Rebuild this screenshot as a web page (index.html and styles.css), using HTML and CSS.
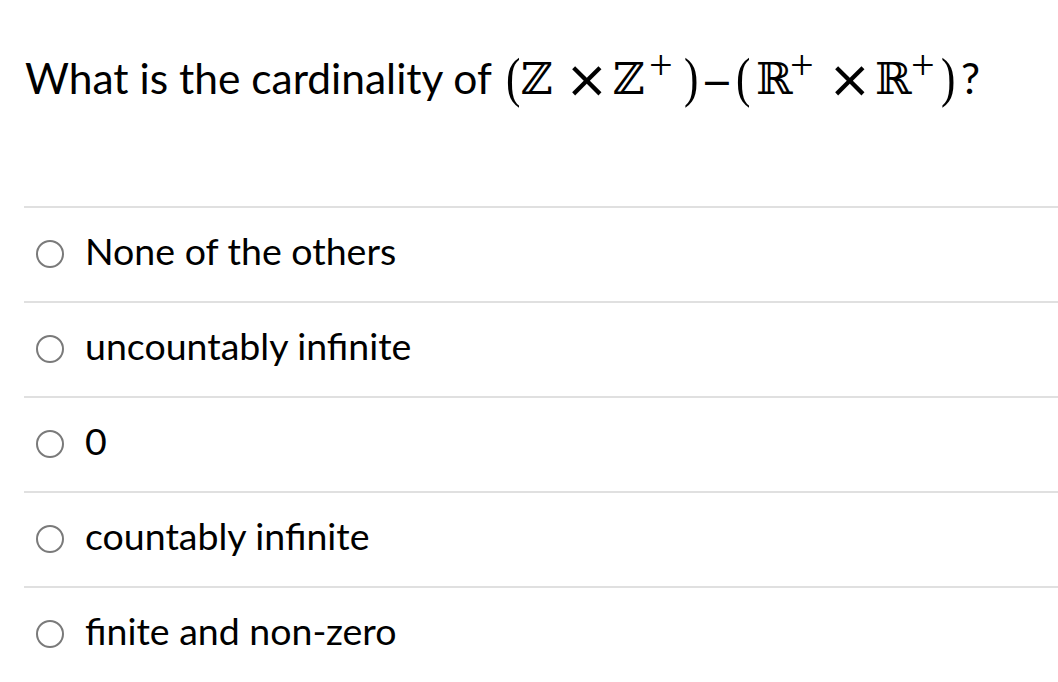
FILE: index.html
```html
<!DOCTYPE html>
<html lang="en">
<head>
<meta charset="utf-8">
<title>Quiz question</title>
<link rel="stylesheet" href="styles.css">
</head>
<body>
<div class="question">
  <h1 class="prompt">What is the cardinality of<span class="math"><span class="tk paren w15">(</span><span class="tk bb w44">ℤ</span><span class="tk op w48">×</span><span class="tk bb w36">ℤ</span><span class="tk sup w35">+</span><span class="tk paren w17">)</span><span class="tk minus w35">−</span><span class="tk paren w20">(</span><span class="tk bb w34">ℝ</span><span class="tk sup w38">+</span><span class="tk op w47">×</span><span class="tk bb w36">ℝ</span><span class="tk sup w30">+</span><span class="tk paren w20">)</span></span>?</h1>
  <ul class="answers">
    <li class="answer"><span class="radio"></span><span class="label">None of the others</span></li>
    <li class="answer"><span class="radio"></span><span class="label">uncountably infinite</span></li>
    <li class="answer"><span class="radio"></span><span class="label">0</span></li>
    <li class="answer"><span class="radio"></span><span class="label">countably infinite</span></li>
    <li class="answer"><span class="radio"></span><span class="label">finite and non-zero</span></li>
  </ul>
</div>
</body>
</html>
```
FILE: styles.css
```css
html, body {
  margin: 0;
  padding: 0;
  background: #ffffff;
}
body {
  font-family: Lato, "Noto Sans", sans-serif;
  color: #000000;
  overflow: hidden;
}
.question {
  padding: 49px 0 0 24px;
}
.prompt {
  margin: 0;
  padding-left: 1px;
  font-size: 42.5px;
  font-weight: 400;
  line-height: 48px;
  height: 48px;
  white-space: nowrap;
}
.math {
  font-family: "Liberation Serif", "DejaVu Serif", serif;
  font-size: 40px;
  line-height: 1;
  margin-left: 14px;
}
.tk {
  display: inline-block;
  line-height: 1;
}
.w15 { width: 15px; }
.w17 { width: 17px; }
.w20 { width: 20px; }
.w30 { width: 30px; }
.w34 { width: 34px; }
.w35 { width: 35px; }
.w36 { width: 36px; }
.w38 { width: 38px; }
.w44 { width: 44px; }
.w47 { width: 47px; }
.w48 { width: 48px; }
.paren {
  font-size: 54px;
  transform-origin: left center;
  transform: scaleX(0.8) translateY(2px);
}
.bb {
  font-family: "DejaVu Serif", serif;
  font-size: 44px;
}
.op {
  font-family: "DejaVu Sans", sans-serif;
  font-size: 52px;
  transform: translateY(3px);
}
.minus {
  font-family: "DejaVu Sans", sans-serif;
  font-size: 38px;
  transform: translateY(1px);
}
.sup {
  font-size: 42px;
  position: relative;
  top: -15px;
}
.answers {
  list-style: none;
  margin: 109px 0 0;
  padding: 0;
}
.answer {
  display: flex;
  align-items: center;
  height: 93px;
  border-top: 2px solid #e0e0e0;
}
.radio {
  box-sizing: border-box;
  width: 28px;
  height: 28px;
  border: 2px solid #7a7a7a;
  border-radius: 50%;
  margin-left: 12px;
  margin-right: 21px;
  margin-bottom: 2px;
  flex: none;
}
.label {
  font-size: 37.5px;
  line-height: 40px;
  margin-bottom: 7px;
}
```
